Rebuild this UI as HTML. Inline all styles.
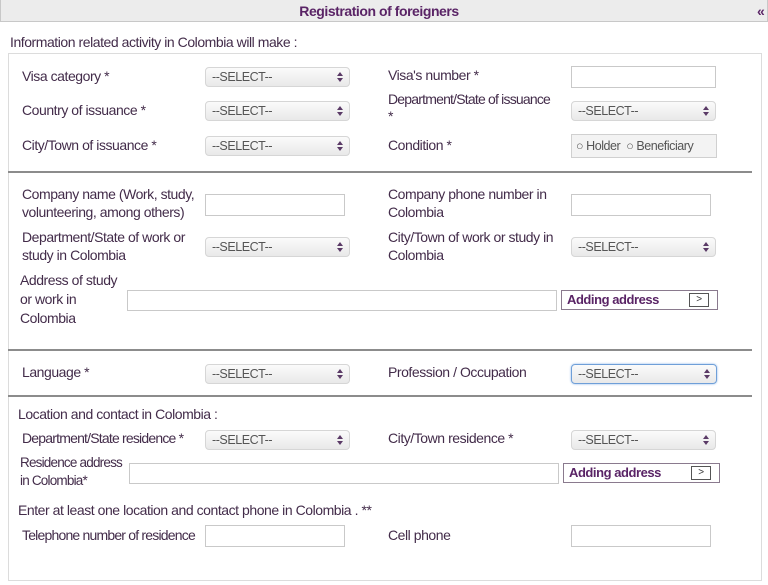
<!DOCTYPE html>
<html><head><meta charset="utf-8"><style>
*{box-sizing:border-box;margin:0;padding:0}
body{width:768px;height:585px;background:#fff;position:relative;overflow:hidden;font-family:"Liberation Sans",sans-serif;font-size:14px;color:#432c4a;letter-spacing:-0.45px}
.a{position:absolute;white-space:nowrap;line-height:18px}
.hdr{position:absolute;left:0;top:0;width:768px;height:22px;background:#ececec;border:1px solid #c8c8c8;border-top:none}
.sel{position:absolute;height:20px;border:1px solid #d6d6d6;border-radius:4px;background:linear-gradient(#fbfbfb,#e9e9e9);font-size:12.5px;line-height:18px;padding-left:6px;color:#555}
.sel:after{content:"";position:absolute;right:6px;border:3px solid transparent;border-bottom:4px solid #5a3a66;height:0;width:0;top:1px}
.sel:before{content:"";position:absolute;right:6px;top:10px;border:3px solid transparent;border-top:4px solid #5a3a66;width:0;height:0}
.inp{position:absolute;border:1px solid #c9c9c9;background:#fff}
.btn{position:absolute;height:20px;border:1px solid #8a7a8e;background:#fff;font-weight:bold;color:#5a2466;font-size:13px;line-height:18px;padding-left:5px}
.btn span{position:absolute;right:8px;top:2px;width:20px;height:14px;border:1px solid #555;font-weight:normal;font-size:10px;line-height:12px;text-align:center;color:#333}
.hr{position:absolute;left:8px;width:744px;height:2px;background:#8c8c8c}
.n{letter-spacing:-0.8px}
</style></head><body>
<div class="hdr"></div>
<div class="a" style="left:0;width:758px;text-align:center;top:2px;font-weight:bold;color:#5a2466;font-size:14px">Registration of foreigners</div>
<div class="a" style="left:757px;top:2px;color:#5a2466;font-weight:bold">«</div>
<div class="a" style="left:10px;top:33px">Information related activity in Colombia will make :</div>
<div style="position:absolute;left:8px;top:53px;width:754px;height:528px;border:1px solid #dcdcdc"></div>

<div class="a" style="left:22px;top:67px">Visa category *</div>
<div class="sel" style="left:205px;top:67px;width:145px">--SELECT--</div>
<div class="a" style="left:388px;top:66px">Visa's number *</div>
<div class="inp" style="left:571px;top:66px;width:145px;height:22px"></div>

<div class="a" style="left:22px;top:101px">Country of issuance *</div>
<div class="sel" style="left:205px;top:101px;width:145px">--SELECT--</div>
<div class="a n" style="left:388px;top:91px;line-height:17px">Department/State of issuance<br>*</div>
<div class="sel" style="left:571px;top:101px;width:145px">--SELECT--</div>

<div class="a" style="left:22px;top:136px">City/Town of issuance *</div>
<div class="sel" style="left:205px;top:136px;width:145px">--SELECT--</div>
<div class="a" style="left:388px;top:136px">Condition *</div>
<div style="position:absolute;left:571px;top:134px;width:146px;height:24px;border:1px solid #d0d0d0;background:#f3f3f3;font-size:12.5px;line-height:22px;color:#555;padding-left:4px">○ Holder &nbsp;○ Beneficiary</div>

<div class="hr" style="top:171px"></div>

<div class="a" style="left:22px;top:185px;line-height:18px">Company name (Work, study,<br>volunteering, among others)</div>
<div class="inp" style="left:205px;top:194px;width:140px;height:22px"></div>
<div class="a" style="left:388px;top:185px;line-height:18px">Company phone number in<br>Colombia</div>
<div class="inp" style="left:571px;top:194px;width:140px;height:22px"></div>

<div class="a" style="left:22px;top:228px;line-height:18px">Department/State of work or<br>study in Colombia</div>
<div class="sel" style="left:205px;top:237px;width:145px">--SELECT--</div>
<div class="a" style="left:388px;top:228px;line-height:18px">City/Town of work or study in<br>Colombia</div>
<div class="sel" style="left:571px;top:237px;width:145px">--SELECT--</div>

<div class="a" style="left:20px;top:271px;line-height:19px">Address of study<br>or work in<br>Colombia</div>
<div class="inp" style="left:127px;top:290px;width:430px;height:21px"></div>
<div class="btn" style="left:561px;top:290px;width:157px">Adding address<span>&gt;</span></div>

<div class="hr" style="top:349px"></div>

<div class="a" style="left:22px;top:363px">Language *</div>
<div class="sel" style="left:205px;top:364px;width:145px">--SELECT--</div>
<div class="a" style="left:388px;top:363px">Profession / Occupation</div>
<div class="sel" style="left:571px;top:364px;width:146px;border:1px solid #6f9fd8;box-shadow:0 0 2px #8ab4e8">--SELECT--</div>

<div class="hr" style="top:395px"></div>

<div class="a" style="left:18px;top:405px">Location and contact in Colombia :</div>
<div class="a n" style="left:22px;top:429px">Department/State residence *</div>
<div class="sel" style="left:205px;top:430px;width:145px">--SELECT--</div>
<div class="a" style="left:388px;top:429px">City/Town residence *</div>
<div class="sel" style="left:571px;top:430px;width:145px">--SELECT--</div>

<div class="a n" style="left:20px;top:454px;line-height:18px;font-size:13.5px">Residence address<br>in Colombia*</div>
<div class="inp" style="left:129px;top:463px;width:430px;height:21px"></div>
<div class="btn" style="left:563px;top:463px;width:157px">Adding address<span>&gt;</span></div>

<div class="a" style="left:18px;top:501px">Enter at least one location and contact phone in Colombia . **</div>
<div class="a n" style="left:22px;top:526px">Telephone number of residence</div>
<div class="inp" style="left:205px;top:525px;width:140px;height:22px"></div>
<div class="a" style="left:388px;top:526px">Cell phone</div>
<div class="inp" style="left:571px;top:525px;width:140px;height:22px"></div>
</body></html>
